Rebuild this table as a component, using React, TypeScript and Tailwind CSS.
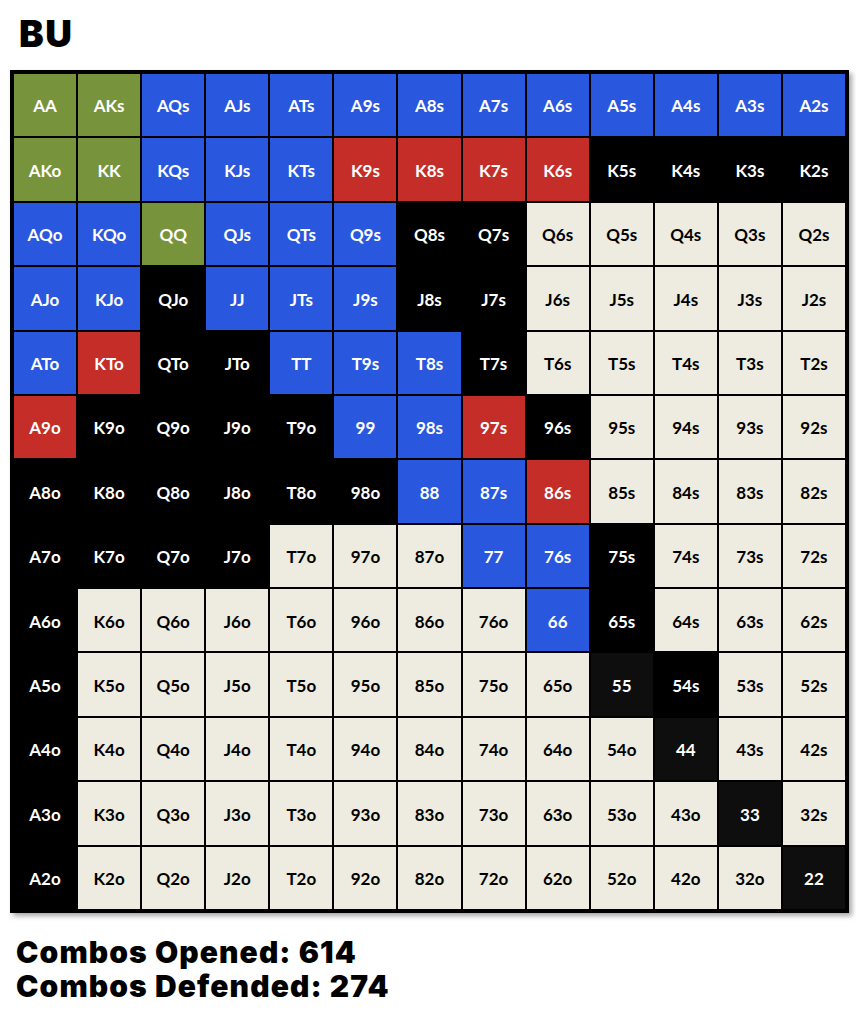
import React from "react";

const R = ["A", "K", "Q", "J", "T", "9", "8", "7", "6", "5", "4", "3", "2"];

// g=green b=blue r=red k=black d=dark(pairs) c=cream
const MAP = [
  "ggbbbbbbbbbbb",
  "ggbbbrrrrkkkk",
  "bbgbbbkkccccc",
  "bbkbbbkkccccc",
  "brkkbbbkccccc",
  "rkkkkbbrkcccc",
  "kkkkkkbbrcccc",
  "kkkkcccbbkccc",
  "kcccccccbkccc",
  "kccccccccdkcc",
  "kccccccccccdc".replace(/d/g, "c"),
  "kcccccccccccc",
  "kcccccccccccc",
];

const BG: Record<string, string> = {
  g: "bg-[#77933c] text-white",
  b: "bg-[#2957de] text-white",
  r: "bg-[#c42d28] text-white",
  k: "bg-black text-white",
  d: "bg-[#0e0e0e] text-white",
  c: "bg-[#eeece1] text-black",
};

function label(i: number, j: number) {
  if (i === j) return R[i] + R[j];
  if (j > i) return R[i] + R[j] + "s";
  return R[j] + R[i] + "o";
}

export default function App() {
  const cellType = (i: number, j: number) => {
    let t = MAP[i][j];
    if (i === j && i >= 9) t = "d";
    return t;
  };
  return (
    <div className="w-[856px] h-[1013px] bg-white relative">
      <div
        className="pl-[19px] pt-[14px] text-[37px] leading-[40px] text-black font-black tracking-[1.5px]"
        style={{ fontFamily: "Inter, 'Liberation Sans', sans-serif" }}
      >
        BU
      </div>
      <div className="ml-[10px] mt-[16px] w-[839px] h-[843px] border-[4px] border-black bg-black shadow-[3px_3px_5px_rgba(0,0,0,0.35)]">
        <div
          className="grid grid-cols-[repeat(13,1fr)] grid-rows-[repeat(13,1fr)] gap-[2px] w-full h-full"
          style={{ fontFamily: "Lato, 'Open Sans', sans-serif" }}
        >
          {R.map((_, i) =>
            R.map((__, j) => (
              <div
                key={i + "-" + j}
                className={
                  "flex items-center justify-center pt-[2px] text-[17px] font-bold " +
                  BG[cellType(i, j)]
                }
              >
                {label(i, j)}
              </div>
            ))
          )}
        </div>
      </div>
      <div
        className="pl-[16px] pt-[22px] text-[30px] leading-[34px] text-black font-black tracking-[1.1px]"
        style={{ fontFamily: "Inter, 'Liberation Sans', sans-serif" }}
      >
        <div>Combos Opened: 614</div>
        <div>Combos Defended: 274</div>
      </div>
    </div>
  );
}
